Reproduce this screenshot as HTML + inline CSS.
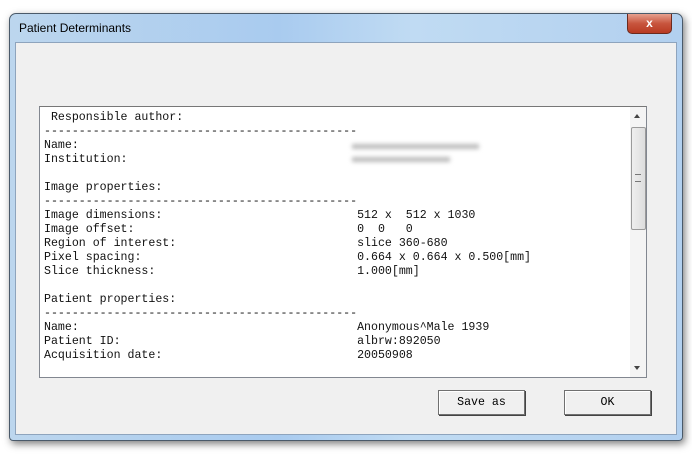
<!DOCTYPE html>
<html><head><style>
body{margin:0;width:692px;height:457px;background:#fff;position:relative;overflow:hidden;font-family:"Liberation Sans",sans-serif}
.win{position:absolute;left:9px;top:13px;width:672px;height:426px;border:1px solid #4a5a6a;border-radius:7px 7px 4px 4px;background:linear-gradient(90deg,#bcd6ee,#a9cbef 40%,#c0dbf3 60%,#b2d0ef);box-shadow:2px 3px 8px rgba(0,0,0,.5)}
.title{position:absolute;left:9px;top:7px;font-size:12px;color:#000}
.close{position:absolute;left:617px;top:0;width:43px;height:19px;border:1px solid #6b2a1e;border-top:none;border-radius:0 0 5px 5px;background:linear-gradient(#e6a08e,#c8553e 50%,#b83a22);color:#fff;font-weight:bold;font-size:12px;text-align:center;line-height:18px}
.client{position:absolute;left:5px;top:28px;width:660px;height:391px;background:#f0f0f0;border:1px solid #8ea4bd}
.box{position:absolute;left:39px;top:106px;width:606px;height:270px;background:#fff;border:1px solid #828790;border-top-color:#777}
pre{margin:0;position:absolute;left:4px;top:4px;font-family:"Liberation Mono",monospace;font-size:11.6px;line-height:14px;color:#111}
.sb{position:absolute;right:0;top:0;width:16px;height:270px;background:#f4f4f4}
.thumb{position:absolute;left:1px;top:20px;width:13px;height:101px;border:1px solid #9a9a9a;border-radius:2px;background:linear-gradient(90deg,#eee,#ddd)}
.blur{position:absolute;height:5px;background:#bbb;filter:blur(2px)}
.btn{position:absolute;top:390px;width:85px;height:23px;border:1px solid #707070;box-shadow:inset 1px 1px #fff,1px 1px #444;background:#f0f0f0;font-family:"Liberation Mono",monospace;font-size:11.6px;text-align:center;line-height:24px}
</style></head><body>
<div class="win">
<div class="title">Patient Determinants</div>
<div class="close">x</div>
<div class="client"></div>
</div>
<div class="box">
<pre> Responsible author:
---------------------------------------------
Name:
Institution:

Image properties:
---------------------------------------------
Image dimensions:                            512 x  512 x 1030
Image offset:                                0  0   0
Region of interest:                          slice 360-680
Pixel spacing:                               0.664 x 0.664 x 0.500[mm]
Slice thickness:                             1.000[mm]

Patient properties:
---------------------------------------------
Name:                                        Anonymous^Male 1939
Patient ID:                                  albrw:892050
Acquisition date:                            20050908</pre>
<div class="blur" style="left:312px;top:37px;width:127px"></div>
<div class="blur" style="left:312px;top:50px;width:98px"></div>
<div class="sb"><div style="position:absolute;left:4px;top:7px;border:3px solid transparent;border-bottom:4px solid #444;border-top:none"></div><div class="thumb"><div style="position:absolute;left:3px;top:46px;width:6px;height:6px;border-top:1px solid #777;border-bottom:1px solid #777"></div></div><div style="position:absolute;left:4px;top:259px;border:3px solid transparent;border-top:4px solid #444;border-bottom:none"></div></div>
</div>
<div class="btn" style="left:438px">Save as</div>
<div class="btn" style="left:564px">OK</div>
</body></html>
